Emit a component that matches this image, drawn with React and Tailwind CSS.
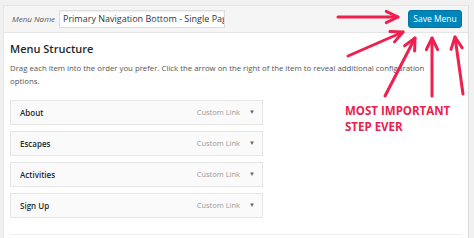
import React from "react";

const items = ["About", "Escapes", "Activities", "Sign Up"];

function Arrows() {
  // annotation arrows drawn over the screenshot
  const red = "#ef1f4f";
  const arrows = [
    { x1: 338, y1: 17, x2: 398, y2: 17 },
    { x1: 348, y1: 56, x2: 403, y2: 32 },
    { x1: 385, y1: 96, x2: 415, y2: 38 },
    { x1: 432, y1: 96, x2: 432, y2: 38 },
    { x1: 463, y1: 94, x2: 455, y2: 37 },
  ];
  return (
    <svg
      className="absolute inset-0 pointer-events-none"
      width="474"
      height="238"
      viewBox="0 0 474 238"
    >
      {arrows.map((a, i) => {
        const ang = Math.atan2(a.y2 - a.y1, a.x2 - a.x1);
        const len = 13;
        const spread = 0.45;
        const w1x = a.x2 - len * Math.cos(ang - spread);
        const w1y = a.y2 - len * Math.sin(ang - spread);
        const w2x = a.x2 - len * Math.cos(ang + spread);
        const w2y = a.y2 - len * Math.sin(ang + spread);
        return (
          <g key={i} stroke={red} strokeWidth="3" fill="none" strokeLinecap="round" strokeLinejoin="round">
            <line x1={a.x1} y1={a.y1} x2={a.x2} y2={a.y2} />
            <polyline points={`${w1x},${w1y} ${a.x2},${a.y2} ${w2x},${w2y}`} />
          </g>
        );
      })}
    </svg>
  );
}

export default function App() {
  return (
    <div className="relative w-[474px] h-[238px] overflow-hidden bg-[#f1f1f1] font-['Open_Sans',sans-serif] text-[#32373c]">
      <div className="ml-[3px] mt-[5px] w-[466px] h-[240px] border border-[#e5e5e5] border-r-[#dcdcdc] bg-white flex flex-col">
        <div className="h-[27px] shrink-0 bg-[#f5f5f5] border-b border-[#e5e5e5] flex items-center pl-[8px] pr-[6px]">
          <span className="w-[47px] shrink-0 italic text-[8px] text-[#555]">Menu Name</span>
          <div className="w-[166px] h-[18px] bg-white border border-[#ddd] shadow-[inset_0_1px_2px_rgba(0,0,0,0.07)] overflow-hidden flex items-center pl-[3px]">
            <span className="text-[9px] whitespace-nowrap text-[#32373c]">
              Primary Navigation Bottom - Single Page
            </span>
          </div>
          <button className="ml-auto w-[54px] h-[18px] rounded-[3px] bg-[#0085ba] border border-[#0073aa] text-white text-[8.5px] leading-none">
            Save Menu
          </button>
        </div>
        <div className="px-[6px] pt-[8px] flex flex-col">
          <h3 className="text-[11px] font-semibold leading-[16px] text-[#23282d]">
            Menu Structure
          </h3>
          <p className="mt-[5px] text-[7.8px] leading-[13px] text-[#555] pr-[30px]">
            Drag each item into the order you prefer. Click the arrow on the right of the item to reveal additional configuration options.
          </p>
          <div className="mt-[12px] flex flex-col gap-[6px] w-[253px]">
            {items.map((t) => (
              <div
                key={t}
                className="h-[25px] bg-[#fafafa] border border-[#e5e5e5] flex items-center pl-[9px] pr-[7px]"
              >
                <span className="text-[8px] font-semibold text-[#23282d]">{t}</span>
                <span className="ml-auto text-[7.5px] text-[#999]">Custom Link</span>
                <span className="ml-[9px] text-[6px] text-[#666]">▼</span>
              </div>
            ))}
          </div>
          <div className="mt-[16px] border-t border-[#eee]" />
        </div>
      </div>
      <Arrows />
      <div className="absolute left-[345px] top-[103px] text-[11.5px] font-bold leading-[16px] text-[#e8224f]">
        MOST IMPORTANT
        <br />
        STEP EVER
      </div>
    </div>
  );
}
